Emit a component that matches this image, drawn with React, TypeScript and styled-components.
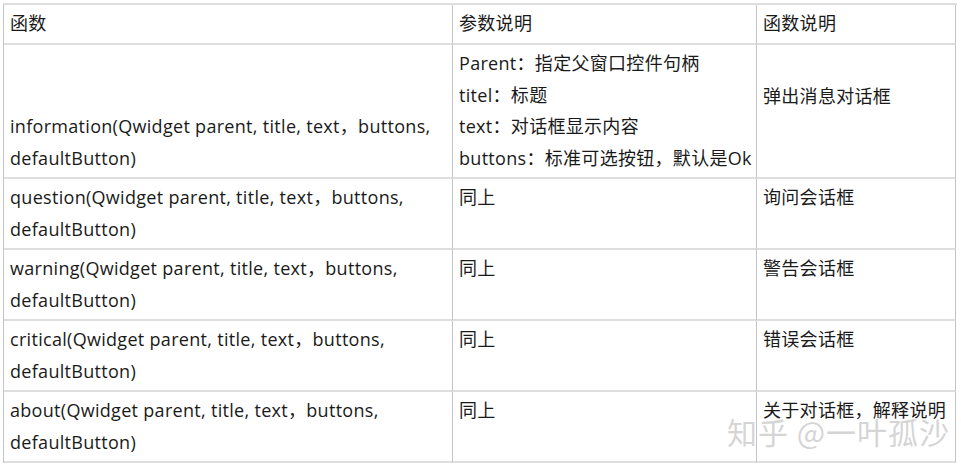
import React from 'react'
import styled, { createGlobalStyle } from 'styled-components'

const GlobalStyle = createGlobalStyle`
    html, body {
        margin: 0;
        padding: 0;
        background: #ffffff;
    }
    body {
        font-family: "Open Sans", "Noto Sans CJK SC", sans-serif;
        color: #1a1a1a;
    }
`

const SPage = styled.div`
    position: relative;
    width: 961px;
    height: 469px;
    padding: 3px 0 0 3px;
    box-sizing: border-box;
    overflow: hidden;
`

const STable = styled.div`
    display: grid;
    grid-template-columns: 449px 304px 199px;
    width: 953px;
    border-top: 2px solid #dedede;
    border-left: 1px solid #c4c4c4;
    box-sizing: content-box;
`

const SCell = styled.div<{ $align?: 'start' | 'end'; $offset?: number; $head?: boolean }>`
    display: flex;
    flex-direction: column;
    justify-content: ${p => (p.$align === 'end' ? 'flex-end' : 'flex-start')};
    padding: ${p => (p.$head ? '3px' : `${3 + (p.$offset ?? 0)}px`)} 6px 3px 6px;
    border-right: 1px solid #c4c4c4;
    border-bottom: 2px solid #dedede;
    font-size: 18px;
    letter-spacing: 0.3px;
    line-height: 31.5px;
    white-space: nowrap;
    min-height: ${p => (p.$head ? '32px' : '63px')};
`

const SLine = styled.span`
    display: block;
`

const SMark = styled.div`
    position: absolute;
    left: 727px;
    top: 409px;
    font-family: "Noto Sans CJK SC", sans-serif;
    font-size: 30px;
    letter-spacing: 1px;
    color: rgba(195, 195, 195, 0.7);
    pointer-events: none;
    white-space: nowrap;
`

type Row = {
    fn: string[]
    params: string[]
    desc: string
}

const rows: Row[] = [
    {
        fn: ['information(Qwidget parent, title, text，buttons,', 'defaultButton)'],
        params: ['Parent：指定父窗口控件句柄', 'titel：标题', 'text：对话框显示内容', 'buttons：标准可选按钮，默认是Ok'],
        desc: '弹出消息对话框',
    },
    {
        fn: ['question(Qwidget parent, title, text，buttons,', 'defaultButton)'],
        params: ['同上'],
        desc: '询问会话框',
    },
    {
        fn: ['warning(Qwidget parent, title, text，buttons,', 'defaultButton)'],
        params: ['同上'],
        desc: '警告会话框',
    },
    {
        fn: ['critical(Qwidget parent, title, text，buttons,', 'defaultButton)'],
        params: ['同上'],
        desc: '错误会话框',
    },
    {
        fn: ['about(Qwidget parent, title, text，buttons,', 'defaultButton)'],
        params: ['同上'],
        desc: '关于对话框，解释说明',
    },
]

export default function App() {
    return (
        <SPage>
            <GlobalStyle />
            <STable>
                <SCell $head>函数</SCell>
                <SCell $head>参数说明</SCell>
                <SCell $head>函数说明</SCell>
                {rows.map((r, i) => {
                    const tall = r.params.length > 1
                    return (
                        <React.Fragment key={i}>
                            <SCell $align={tall ? 'end' : 'start'}>
                                {r.fn.map(l => <SLine key={l}>{l}</SLine>)}
                            </SCell>
                            <SCell>
                                {r.params.map(l => <SLine key={l}>{l}</SLine>)}
                            </SCell>
                            <SCell $offset={tall ? 33 : 0}>
                                <SLine>{r.desc}</SLine>
                            </SCell>
                        </React.Fragment>
                    )
                })}
            </STable>
            <SMark>知乎 @一叶孤沙</SMark>
        </SPage>
    )
}
